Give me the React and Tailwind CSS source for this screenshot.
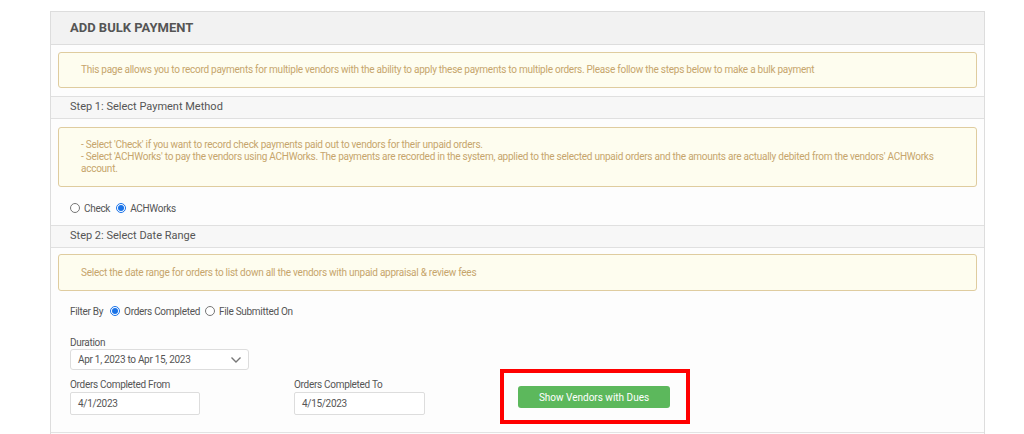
import React, { useState } from 'react';

const InfoBox = ({ children, className = '' }) => (
  <div
    className={`rounded-[3px] border border-[#dfcc9f] bg-[#fefdef] px-[22px] text-[10px] leading-[12px] tracking-[-0.25px] text-[#c6a56c] ${className}`}
  >
    {children}
  </div>
);

const StepHeader = ({ title }) => (
  <div className="flex h-[23px] items-center border-y border-[#e0e0e0] bg-[#f7f7f7] px-[19px] text-[11px] text-[#555]">
    {title}
  </div>
);

const Radio = ({ checked, onChange, label }) => (
  <label className="flex items-center gap-[4px] text-[10px] tracking-[-0.3px] text-[#555]">
    <input
      type="radio"
      checked={checked}
      onChange={onChange}
      className="m-0 h-[10px] w-[10px] accent-[#1a73e8]"
    />
    {label}
  </label>
);

const App = () => {
  const [method, setMethod] = useState('ach');
  const [filterBy, setFilterBy] = useState('completed');

  return (
    <div className="h-[434px] overflow-hidden bg-white pt-[11px] font-['Roboto','Liberation_Sans',sans-serif]">
      <div className="ml-[50px] w-[935px] border border-[#ddd] bg-[#fdfdfd]">
        <div className="flex h-[33px] items-center border-b border-[#ddd] bg-[#f2f2f2] px-[19px] text-[13px] font-bold text-[#555]">
          ADD BULK PAYMENT
        </div>

        <div className="px-[7px] pb-[8px] pt-[7px]">
          <InfoBox className="py-[11px]">
            This page allows you to record payments for multiple vendors with the ability to apply these payments to multiple orders. Please follow the steps below to make a bulk payment
          </InfoBox>
        </div>

        <StepHeader title="Step 1: Select Payment Method" />

        <div className="px-[7px] pt-[8px]">
          <InfoBox className="pb-[11px] pt-[11px]">
            <div>- Select 'Check' if you want to record check payments paid out to vendors for their unpaid orders.</div>
            <div>
              - Select 'ACHWorks' to pay the vendors using ACHWorks. The payments are recorded in the system, applied to the selected unpaid orders and the amounts are actually debited from the vendors' ACHWorks account.
            </div>
          </InfoBox>
        </div>
        <div className="mb-[9px] mt-[13px] flex h-[16px] items-center gap-[6px] px-[19px]">
          <Radio checked={method === 'check'} onChange={() => setMethod('check')} label="Check" />
          <Radio checked={method === 'ach'} onChange={() => setMethod('ach')} label="ACHWorks" />
        </div>

        <StepHeader title="Step 2: Select Date Range" />

        <div className="px-[7px] pt-[6px]">
          <InfoBox className="pb-[11px] pt-[12px]">
            Select the date range for orders to list down all the vendors with unpaid appraisal &amp; review fees
          </InfoBox>
        </div>

        <div className="px-[19px] pb-[8px]">
          <div className="mt-[12px] flex h-[16px] items-center gap-[5px] text-[10px] tracking-[-0.3px] text-[#555]">
            <span className="mr-[2px]">Filter By</span>
            <Radio
              checked={filterBy === 'completed'}
              onChange={() => setFilterBy('completed')}
              label="Orders Completed"
            />
            <Radio
              checked={filterBy === 'submitted'}
              onChange={() => setFilterBy('submitted')}
              label="File Submitted On"
            />
          </div>

          <div className="mt-[17px] text-[10px] leading-[13px] tracking-[-0.3px] text-[#555]">Duration</div>
          <div className="flex h-[21px] w-[179px] items-center justify-between rounded-[3px] border border-[#ddd] bg-white pl-[7px] pr-[6px] text-[10px] tracking-[-0.3px] text-[#555]">
            <span>Apr 1, 2023 to Apr 15, 2023</span>
            <svg width="12" height="8" viewBox="0 0 12 8" fill="none">
              <path d="M1.5 1.5 6 6l4.5-4.5" stroke="#777" strokeWidth="1.4" />
            </svg>
          </div>

          <div className="-mt-[1px] flex items-center">
            <div className="w-[224px]">
              <div className="text-[10px] leading-[13px] tracking-[-0.3px] text-[#555]">Orders Completed From</div>
              <div className="mt-[1px] flex h-[23px] w-[130px] items-center rounded-[2px] border border-[#ddd] bg-white px-[7px] text-[10px] tracking-[-0.3px] text-[#555]">
                4/1/2023
              </div>
            </div>
            <div className="w-[206px]">
              <div className="text-[10px] leading-[13px] tracking-[-0.3px] text-[#555]">Orders Completed To</div>
              <div className="mt-[1px] flex h-[23px] w-[131px] items-center rounded-[2px] border border-[#ddd] bg-white px-[7px] text-[10px] tracking-[-0.3px] text-[#555]">
                4/15/2023
              </div>
            </div>
            <div className="h-[55px] w-[190px] border-[4px] border-[#ff0000] pl-[14px] pt-[13px]">
              <button className="flex h-[22px] w-[152px] items-center justify-center rounded-[3px] bg-[#5cb85c] text-[10px] text-white">
                Show Vendors with Dues
              </button>
            </div>
          </div>
        </div>
        <div className="h-[10px] border-t border-[#e3e3e3]" />
      </div>
    </div>
  );
};

export default App;
